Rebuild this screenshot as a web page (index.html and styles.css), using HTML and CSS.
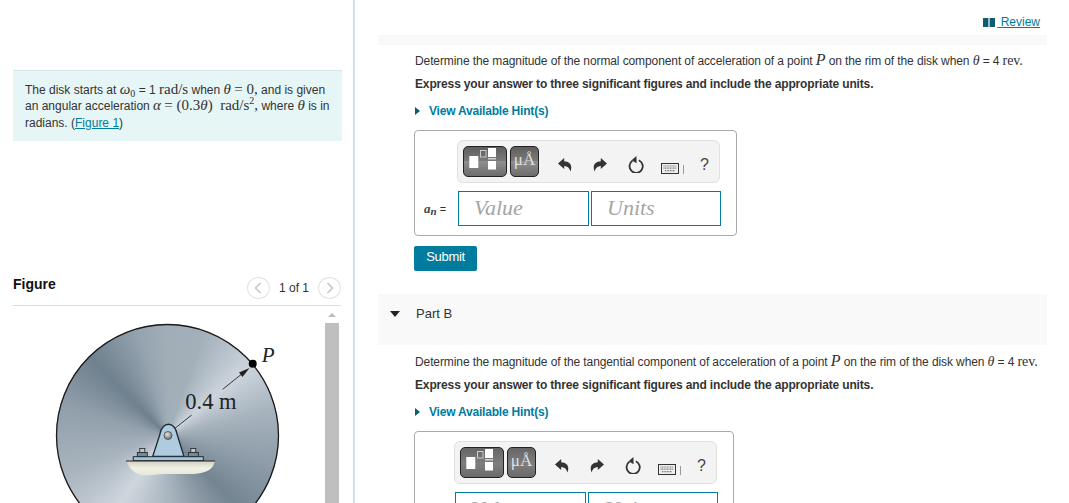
FILE: index.html
```html
<!DOCTYPE html>
<html lang="en">
<head>
<meta charset="utf-8">
<title>Disk acceleration</title>
<link rel="stylesheet" href="styles.css">
</head>
<body>
<svg class="defs" width="0" height="0" aria-hidden="true">
  <symbol id="undo" viewBox="0 0 14 14"><path d="M0 5.4 6.2 0V3.3C11.4 3.5 15 7 12.4 13.6 11.6 10.2 9.6 8 6.2 8V11Z" fill="#333"/></symbol>
  <symbol id="refresh" viewBox="0 0 16 17"><path d="M4.4 4.8A6.6 6.6 0 1 0 10.8 4.2" fill="none" stroke="#333" stroke-width="1.8"/><path d="M8.4 0 8.6 7.2 3.6 4.2Z" fill="#333"/></symbol>
  <symbol id="kbd" viewBox="0 0 18 11"><rect x=".5" y=".5" width="17" height="10" fill="#eee" stroke="#333"/><path d="M2.5 3h13M2.5 5.2h13M4 7.6h10" stroke="#777" stroke-width="1.2" stroke-dasharray="1 .6"/></symbol>
  <symbol id="templates" viewBox="1 1 42 29"><rect x="6.3" y="10" width="9" height="12" fill="#fff"/><rect x="17.5" y="4.5" width="5.5" height="6.5" fill="none" stroke="#ccc"/><rect x="25" y="2" width="8" height="9" fill="#fff"/><rect x="25" y="12.2" width="8" height="1.2" fill="#eee"/><rect x="25" y="15" width="8" height="8.5" fill="#fff"/></symbol>
</svg>

<aside class="left">
  <div class="intro">
    The disk starts at <i class="m">ω</i><sub class="m">0</sub> = 1 <span class="m">rad/s</span> when <i class="m">θ</i> <span class="m">= 0,</span> and is given<br>an angular acceleration <i class="m">α</i> <span class="m">= (0.3<i>θ</i>) &nbsp;rad/s<sup>2</sup>,</span> where <i class="m">θ</i> is in<br>radians. (<a href="#fig">Figure 1</a>)
  </div>
  <div class="fig-head" id="fig">
    <h2>Figure</h2>
    <div class="pager">
      <span class="circle">
        <svg width="8" height="12" viewBox="0 0 8 12"><path d="M6.5 1 1.5 6l5 5" fill="none" stroke="#c4c4c4" stroke-width="1.5"/></svg>
      </span>
      <span class="count">1 of 1</span>
      <span class="circle">
        <svg width="8" height="12" viewBox="0 0 8 12"><path d="M1.5 1l5 5-5 5" fill="none" stroke="#c4c4c4" stroke-width="1.5"/></svg>
      </span>
    </div>
  </div>
  <div class="fig-view">
    <div class="fig-canvas">
      <div class="disk"></div>
      <svg class="disk-art" width="240" height="198" viewBox="0 0 240 198">
        <defs>
          <linearGradient id="base" x1="0" x2="0" y1="0" y2="1"><stop offset="0" stop-color="#cfd0c0"/><stop offset=".5" stop-color="#f1f1e6"/><stop offset="1" stop-color="#e6e6d8"/></linearGradient>
          <radialGradient id="pin" cx=".4" cy=".35" r=".7"><stop offset="0" stop-color="#e5e5e5"/><stop offset="1" stop-color="#666"/></radialGradient>
        </defs>
        <circle cx="114.5" cy="129.5" r="111" fill="none" stroke="#1a1a1a" stroke-width="1.3"/>
        <path d="M169.7 83.3 190 67" fill="none" stroke="#222" stroke-width=".9"/>
        <path d="M196.5 62 186 66.5 189.5 71Z" fill="#222"/>
        <circle cx="199.7" cy="57.7" r="4" fill="#000"/>
        <path d="M122 122.3 138.7 109" fill="none" stroke="#222" stroke-width=".9"/>
        <text x="208.7" y="55.7" class="lbl-p">P</text>
        <text x="158" y="103" class="lbl">0.4 m</text>
        <path d="M99.7 150.5 107 128C109 115 122 115 124 128L131 150.5Z" fill="#aecbe0" stroke="#1c2a33" stroke-width="1.3"/>
        <circle cx="115" cy="129.5" r="4" fill="url(#pin)" stroke="#444" stroke-width=".7"/>
        <rect x="84.3" y="146.5" width="10" height="4" fill="#6d8b9a" stroke="#222" stroke-width=".8"/>
        <rect x="135.3" y="146.5" width="10" height="4" fill="#6d8b9a" stroke="#222" stroke-width=".8"/>
        <rect x="86.8" y="142.5" width="5" height="4" fill="#b8c8d2" stroke="#222" stroke-width=".8"/>
        <rect x="137.8" y="142.5" width="5" height="4" fill="#b8c8d2" stroke="#222" stroke-width=".8"/>
        <rect x="80.3" y="150.7" width="70" height="4" fill="#a5c3d8" stroke="#1c2a33" stroke-width="1"/>
        <path d="M73.7 155H162C160 164 153 167 141 168 126 168.5 111 167 96 169.5 83 170.5 76 163 73.7 155Z" fill="url(#base)"/>
        <path d="M73 155H162" stroke="#222" stroke-width="1"/>
      </svg>
    </div>
    <div class="scrollbar">
      <div class="scroll-up"></div>
      <div class="scroll-thumb"></div>
    </div>
  </div>
</aside>

<main class="right">
  <div class="review">
    <svg width="12" height="9" viewBox="0 0 12 9"><path d="M0 0h5.4v9H0zM6.6 0H12v9H6.6z" fill="#0d5c6f"/></svg>
    <a href="#review">&nbsp;Review</a>
  </div>
  <div class="band"></div>

  <section class="part">
    <p class="q">Determine the magnitude of the normal component of acceleration of a point <i class="m big">P</i> on the rim of the disk when <i class="m">θ</i> = 4 <span class="m">rev.</span></p>
    <p class="ask">Express your answer to three significant figures and include the appropriate units.</p>
    <p class="hint"><span class="tri"></span><a href="#a">View Available Hint(s)</a></p>
    <div class="answer">
      <div class="toolbar">
        <div class="tb-group">
          <span class="tb-btn tb-wide"><svg width="42" height="29"><use href="#templates"/></svg></span>
          <span class="tb-btn tb-unit">μÅ</span>
        </div>
        <div class="tb-icons">
          <svg class="ic" width="14" height="14"><use href="#undo"/></svg>
          <svg class="ic flip" width="14" height="14"><use href="#undo"/></svg>
          <svg class="ic ic-refresh" width="16" height="17"><use href="#refresh"/></svg>
          <span class="kbd-wrap"><svg width="18" height="11"><use href="#kbd"/></svg><span class="pipe"></span></span>
          <span class="help">?</span>
        </div>
      </div>
      <div class="eq">
        <span class="eq-label"><i class="m an">a<sub>n</sub></i> =</span>
        <span class="field">Value</span>
        <span class="field field-units">Units</span>
      </div>
    </div>
    <button class="submit" type="button">Submit</button>
  </section>

  <div class="part-head"><span class="down"></span><span>Part B</span></div>

  <section class="part part-b">
    <p class="q">Determine the magnitude of the tangential component of acceleration of a point <i class="m big">P</i> on the rim of the disk when <i class="m">θ</i> = 4 <span class="m">rev.</span></p>
    <p class="ask">Express your answer to three significant figures and include the appropriate units.</p>
    <p class="hint"><span class="tri"></span><a href="#b">View Available Hint(s)</a></p>
    <div class="answer answer-b">
      <div class="toolbar">
        <div class="tb-group">
          <span class="tb-btn tb-wide soft"><svg width="42" height="29"><use href="#templates"/></svg></span>
          <span class="tb-btn tb-unit soft">μÅ</span>
        </div>
        <div class="tb-icons">
          <svg class="ic" width="14" height="14"><use href="#undo"/></svg>
          <svg class="ic flip" width="14" height="14"><use href="#undo"/></svg>
          <svg class="ic ic-refresh" width="16" height="17"><use href="#refresh"/></svg>
          <span class="kbd-wrap"><svg width="18" height="11"><use href="#kbd"/></svg><span class="pipe"></span></span>
          <span class="help">?</span>
        </div>
      </div>
      <div class="eq">
        <span class="eq-label"></span>
        <span class="field">Value</span>
        <span class="field field-units">Units</span>
      </div>
    </div>
  </section>
</main>
</body>
</html>
```
FILE: styles.css
```css
* { box-sizing: border-box; }
html, body { margin: 0; height: 503px; overflow: hidden; }
body {
  display: flex;
  width: 1069px;
  background: #fff;
  color: #333;
  font: 12px/16px "Liberation Sans", Arial, sans-serif;
}
a { color: #007c9f; }
p { margin: 0; }
.defs { position: absolute; }
.m { font-family: "Liberation Serif", serif; font-size: 14px; line-height: 0; }
.intro .m { font-size: 15px; }
.intro sub.m { font-size: 10px; line-height: 0; }
.intro .m sup { font-size: 10px; line-height: 0; }
.q .big { font-size: 16px; }

.left {
  flex: 0 0 355px;
  height: 503px;
  padding: 70px 0 0 13px;
  border-right: 2px solid #d5e0ea;
}
.intro {
  width: 329px;
  height: 71px;
  padding: 10.5px 0 0 12px;
  background: #e6f5f6;
  border-top: 1px solid #d8e4e8;
  white-space: nowrap;
  line-height: 16.8px;
}
.fig-head {
  display: flex;
  justify-content: space-between;
  align-items: center;
  width: 328px;
  height: 35px;
  margin-top: 130px;
  border-bottom: 1px solid #d9dde0;
}
.fig-head h2 { margin: 0 0 8px; font-size: 14px; color: #111; line-height: 16px; }
.pager { display: flex; align-items: center; gap: 9px; color: #333; }
.circle {
  display: flex;
  align-items: center;
  justify-content: center;
  width: 23px;
  height: 22px;
  border: 1px solid #e3e3e3;
  border-radius: 50%;
}
.fig-view {
  display: flex;
  justify-content: space-between;
  width: 326px;
  height: 198px;
  overflow: hidden;
}
.fig-canvas { position: relative; flex: 1; }
.disk {
  position: absolute;
  left: 43px;
  top: 18px;
  width: 223px;
  height: 223px;
  border-radius: 50%;
  background: conic-gradient(#a1aeb8 0deg, #a3b0ba 20deg, #cdd4dc 50deg, #a8b4be 75deg, #8e9da9 105deg, #748592 135deg, #a5b1bb 175deg, #cfd6dd 215deg, #a8b3bd 250deg, #92a0ac 285deg, #6f808e 315deg, #95a4af 345deg, #a1aeb8 360deg);
}
.disk-art { position: absolute; left: 40px; top: 0; }
.lbl { font: 22.5px "Liberation Serif", serif; fill: #222; text-anchor: middle; }
.lbl-p { font: italic 21px "Liberation Serif", serif; fill: #222; }
.scrollbar {
  flex: 0 0 14px;
  display: flex;
  flex-direction: column;
  align-items: stretch;
}
.scroll-up {
  flex: 0 0 4px;
  margin: 7px auto 0;
  width: 0;
  height: 0;
  border-left: 4px solid transparent;
  border-right: 4px solid transparent;
  border-bottom: 4px solid #bbb;
}
.scroll-thumb { flex: 1; margin-top: 6px; background: #bfbfbf; }

.right { flex: 1; min-width: 0; padding: 0 22px 0 23px; }
.review {
  display: flex;
  justify-content: flex-end;
  align-items: center;
  gap: 2px;
  height: 35px;
  padding: 14px 7px 5px 0;
}
.band { height: 10px; background: #f9f9f9; }
.part { padding: 8px 0 0 37px; }
.q { white-space: nowrap; letter-spacing: -.1px; }
.ask { margin-top: 7px; font-weight: bold; letter-spacing: -.15px; white-space: nowrap; }
.hint { display: flex; align-items: center; margin-top: 11px; }
.hint a { font-weight: bold; text-decoration: none; letter-spacing: -.2px; }
.tri {
  width: 0;
  height: 0;
  margin-right: 9px;
  border-top: 4px solid transparent;
  border-bottom: 4px solid transparent;
  border-left: 5px solid #0d5c6f;
}
.answer {
  width: 323px;
  height: 106px;
  margin: 11px 0 0 -1px;
  padding: 9px 15px 0 42px;
  border: 1px solid #aaa;
  border-radius: 4px;
}
.answer-b { width: 320px; padding-left: 39px; }
.toolbar {
  display: flex;
  align-items: center;
  width: 263px;
  height: 43px;
  padding-left: 5px;
  background: #f3f3f3;
  border: 1px solid #e0e0e0;
  border-radius: 6px;
}
.tb-group { display: flex; gap: 3px; }
.tb-btn {
  display: flex;
  align-items: center;
  justify-content: center;
  height: 31px;
  border: 1px solid #222;
  border-radius: 5px;
  color: #e0e0e0;
  background: linear-gradient(#5e5e5e, #7b7b7b 50%, #8f8f8f 50%, #6c6c6c);
}
.tb-btn.soft { background: linear-gradient(#666, #7c7c7c 50%, #808080 50%, #6a6a6a); }
.tb-wide { width: 44px; flex: 0 0 44px; }
.tb-unit { width: 29px; padding-bottom: 4px; font: 17px "Liberation Serif", serif; }
.tb-icons {
  display: flex;
  align-items: center;
  margin-left: 19px;
  gap: 21px;
  padding-top: 7px;
}
.ic { display: block; }
.ic-refresh { margin-bottom: 2px; }
.flip { transform: scaleX(-1); }
.kbd-wrap { display: flex; align-items: flex-end; gap: 4px; margin-left: -4px; margin-top: 6px; }
.pipe { width: 1px; height: 9px; background: #999; }
.help { margin-left: -5px; font-size: 16px; color: #444; }
.eq { display: flex; align-items: center; margin: 8px 0 0 -33px; gap: 2px; }
.eq-label { flex: 0 0 33px; margin-right: -1px; font-size: 11px; white-space: nowrap; }
.an { font-weight: bold; font-size: 13px; color: #444; }
.an sub { font-size: 11px; line-height: 0; vertical-align: -2px; }
.field {
  display: block;
  flex: 0 0 131px;
  height: 35px;
  padding-left: 15px;
  border: 1px solid #007c9f;
  font: italic 22px/32px "Liberation Serif", serif;
  color: #a5a5a5;
  background: #fff;
}
.field-units { flex-basis: 130px; }
.submit {
  display: block;
  width: 63px;
  height: 25px;
  margin: 10px 0 0 -1px;
  padding: 0 0 5px;
  border: 0;
  border-radius: 2px;
  background: #007c9f;
  color: #fff;
  font: 13px "Liberation Sans", sans-serif;
  letter-spacing: -.3px;
}
.part-head {
  display: flex;
  align-items: center;
  height: 51px;
  margin-top: 23px;
  padding: 0 0 11px 12px;
  background: #f9f9f9;
  font-size: 13px;
}
.down {
  width: 0;
  height: 0;
  margin-right: 16px;
  border-left: 5px solid transparent;
  border-right: 5px solid transparent;
  border-top: 6px solid #222;
}
.part-b { padding-top: 9px; }
```
